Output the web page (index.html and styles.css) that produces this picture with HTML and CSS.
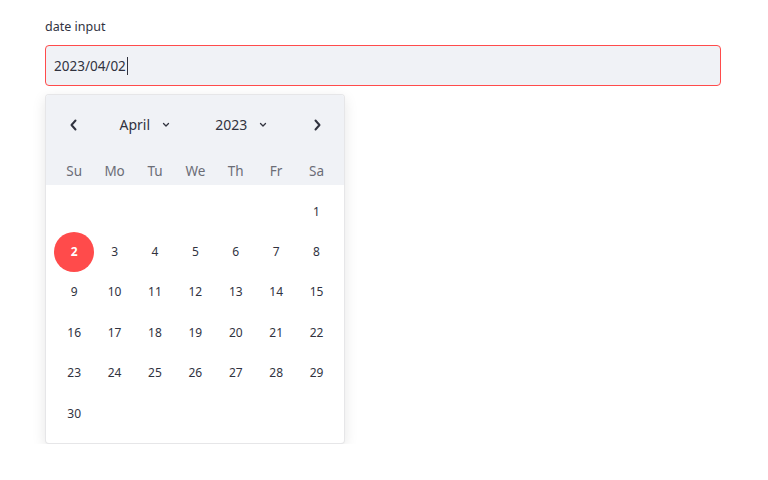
FILE: index.html
```html
<!DOCTYPE html>
<html>
<head>
<meta charset="utf-8">
<link rel="stylesheet" href="styles.css">
</head>
<body>
<div class="page">
  <div class="label">date input</div>
  <div class="input"><span class="value">2023/04/02</span><span class="caret"></span></div>
  <div class="popup">
    <div class="head">
      <div class="nav">
        <span class="arrow"><svg width="10" height="12" viewBox="0 0 10 12"><path d="M6.5 1.5 L2.5 6 L6.5 10.5" fill="none" stroke="#31333f" stroke-width="2" stroke-linecap="round" stroke-linejoin="round"/></svg></span>
        <span class="sel month">April<svg width="8" height="6" viewBox="0 0 8 6"><path d="M1.5 1.5 L4 4 L6.5 1.5" fill="none" stroke="#31333f" stroke-width="1.3" stroke-linecap="round" stroke-linejoin="round"/></svg></span>
        <span class="sel year">2023<svg width="8" height="6" viewBox="0 0 8 6"><path d="M1.5 1.5 L4 4 L6.5 1.5" fill="none" stroke="#31333f" stroke-width="1.3" stroke-linecap="round" stroke-linejoin="round"/></svg></span>
        <span class="arrow"><svg width="10" height="12" viewBox="0 0 10 12"><path d="M3.5 1.5 L7.5 6 L3.5 10.5" fill="none" stroke="#31333f" stroke-width="2" stroke-linecap="round" stroke-linejoin="round"/></svg></span>
      </div>
      <div class="week">
        <span>Su</span><span>Mo</span><span>Tu</span><span>We</span><span>Th</span><span>Fr</span><span>Sa</span>
      </div>
    </div>
    <div class="days">
      <span></span><span></span><span></span><span></span><span></span><span></span><span>1</span>
      <span><b class="selected">2</b></span><span>3</span><span>4</span><span>5</span><span>6</span><span>7</span><span>8</span>
      <span>9</span><span>10</span><span>11</span><span>12</span><span>13</span><span>14</span><span>15</span>
      <span>16</span><span>17</span><span>18</span><span>19</span><span>20</span><span>21</span><span>22</span>
      <span>23</span><span>24</span><span>25</span><span>26</span><span>27</span><span>28</span><span>29</span>
      <span>30</span>
    </div>
  </div>
</div>
</body>
</html>
```

FILE: styles.css
```css
* { box-sizing: border-box; }
body {
  margin: 0;
  background: #ffffff;
  font-family: "Noto Sans", "Open Sans", sans-serif;
  color: #31333f;
}
.page {
  padding: 19px 47px 0 45px;
}
.label {
  font-size: 12.5px;
  line-height: 16px;
  height: 16px;
}
.input {
  margin-top: 10px;
  height: 41px;
  border: 1px solid #ff4b4b;
  border-radius: 4px;
  background: #f0f2f6;
  display: flex;
  align-items: center;
  padding-left: 8px;
  font-size: 13.5px;
}
.caret {
  display: inline-block;
  width: 1px;
  height: 18px;
  background: #31333f;
  margin-left: 1px;
}
.popup {
  margin-top: 8px;
  width: 300px;
  border: 1px solid rgba(49, 51, 63, 0.12);
  border-radius: 4px;
  box-shadow: 0 4px 14px rgba(0, 0, 0, 0.10);
  background: #fff;
  overflow: hidden;
  padding-bottom: 10px;
}
.head {
  background: #f0f2f6;
  padding: 0 7px 0 8px;
}
.nav {
  height: 59px;
  display: grid;
  grid-template-columns: 40px 1fr 1fr 40px;
  align-items: center;
}
.arrow {
  display: flex;
  justify-content: center;
  align-items: center;
}
.sel {
  display: flex;
  justify-content: center;
  align-items: center;
  gap: 12px;
  font-size: 14px;
}
.sel svg { margin-top: 1px; }
.year { padding-right: 10px; }
.week {
  height: 31px;
  display: grid;
  grid-template-columns: repeat(7, 40.4px);
  align-items: start;
  font-size: 13.5px;
  color: #6b6d76;
}
.week span { text-align: center; line-height: 24px; padding-top: 5px; }
.days {
  padding: 6px 7px 0 8px;
  display: grid;
  grid-template-columns: repeat(7, 40.4px);
  grid-auto-rows: 40.4px;
  font-size: 12px;
}
.days span {
  display: flex;
  justify-content: center;
  align-items: center;
}
.selected {
  width: 40px;
  height: 40px;
  border-radius: 50%;
  background: #ff4b4b;
  color: #fff;
  font-weight: 700;
  display: flex;
  justify-content: center;
  align-items: center;
}
```
